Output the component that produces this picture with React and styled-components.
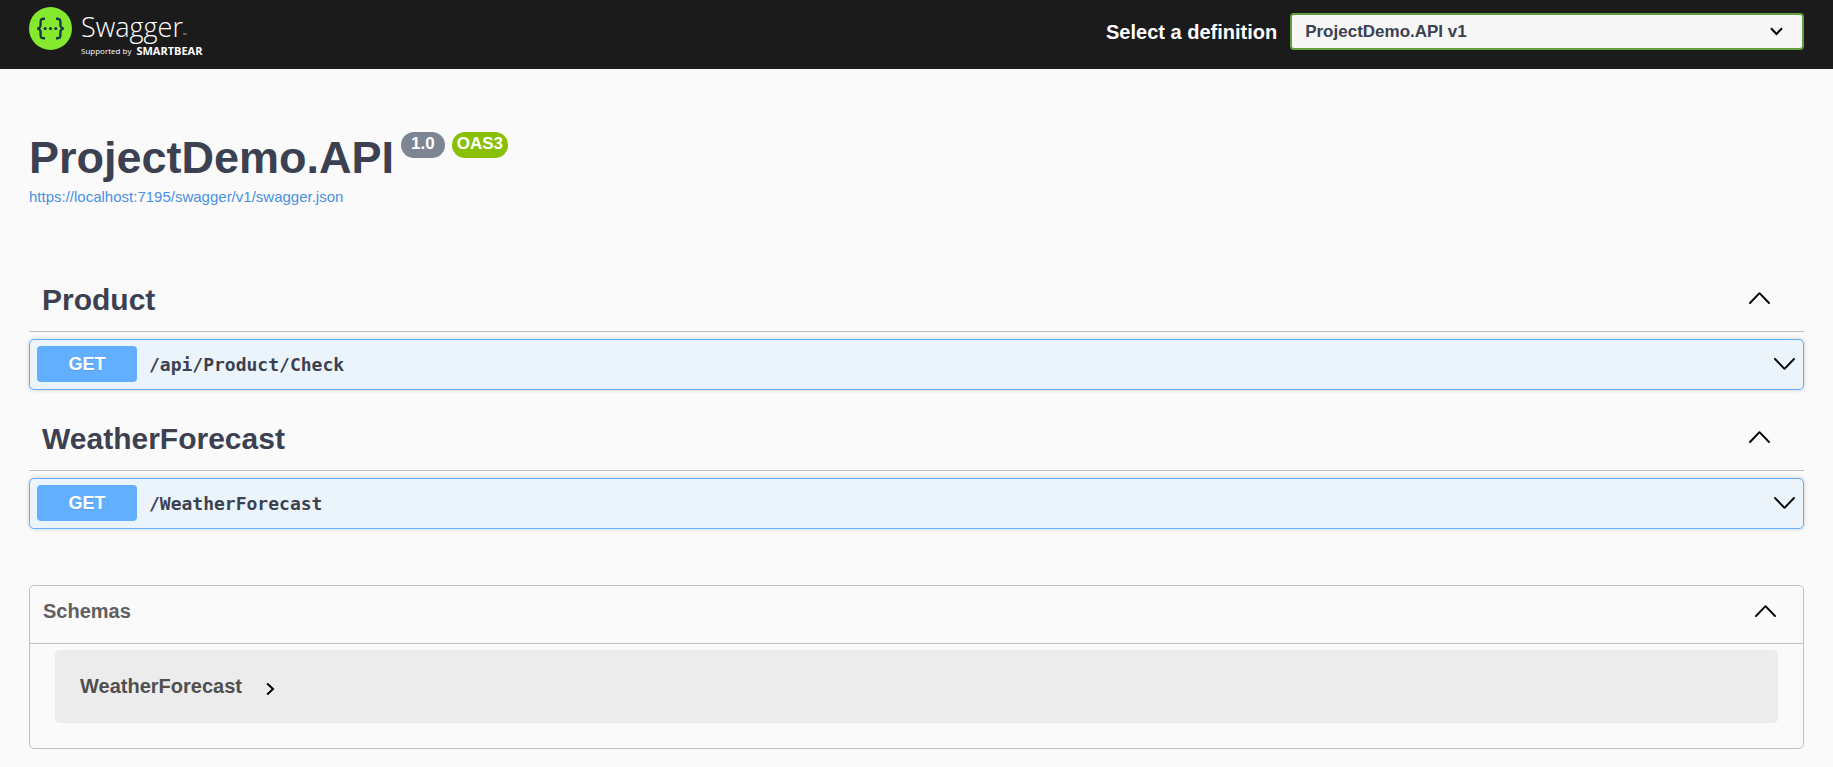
import { useState } from "react";
import styled, { createGlobalStyle } from "styled-components";

const colors = {
  text: "#3b4151",
  link: "#4990e2",
  get: "#61affe",
  green: "#62a03f",
};

const GlobalStyle = createGlobalStyle`
  * {
    box-sizing: border-box;
  }
  body {
    margin: 0;
    background: #fafafa;
    color: ${colors.text};
    font-family: "Liberation Sans", Arial, sans-serif;
  }
  button {
    margin: 0;
    padding: 0;
    border: none;
    background: none;
    color: inherit;
    font: inherit;
    cursor: pointer;
  }
`;

const Topbar = styled.header`
  display: flex;
  align-items: center;
  justify-content: space-between;
  padding: 7px 29px 13px;
  background: #1b1b1b;
`;
const Logo = styled.a`
  display: flex;
  align-items: flex-start;
  gap: 9px;
  color: white;
  text-decoration: none;
  font-family: "Open Sans", sans-serif;
`;
const LogoText = styled.span`
  display: flex;
  flex-direction: column;
`;
const Wordmark = styled.span`
  font-size: 27px;
  font-weight: 300;
  line-height: 39px;

  small {
    font-size: 5px;
    line-height: 5px;
  }
`;
const Tagline = styled.span`
  display: flex;
  gap: 5px;
  font-size: 8px;
  line-height: 10px;

  strong {
    font-size: 11px;
    font-weight: 700;
  }
`;
const Definition = styled.div`
  display: flex;
  align-items: center;
  gap: 13px;
  flex: 0 1 698px;
`;
const DefinitionLabel = styled.label`
  flex: 1;
  color: white;
  font-size: 20px;
  font-weight: 700;
  line-height: 24px;
  text-align: right;
  white-space: nowrap;
`;
const SelectBox = styled.div`
  position: relative;
  flex: 0 1 514px;

  svg {
    position: absolute;
    top: 14px;
    right: 21px;
    pointer-events: none;
  }
`;
const Select = styled.select`
  display: block;
  width: 100%;
  height: 37px;
  padding: 0 50px 0 13px;
  border: 2px solid ${colors.green};
  border-radius: 4px;
  background: #f7f7f7;
  color: ${colors.text};
  font-family: inherit;
  font-size: 17px;
  font-weight: 700;
  appearance: none;
`;

const Page = styled.main`
  padding: 63px 29px 18px;
`;
const Info = styled.section`
  margin-bottom: 62px;
`;
const TitleRow = styled.div`
  display: flex;
  align-items: flex-start;
  gap: 7px;
  margin-bottom: 2px;
`;
const Title = styled.h1`
  margin: 0;
  font-size: 45px;
  font-weight: 700;
  line-height: 52px;
`;
const Badge = styled.span`
  padding: 0 ${(props) => props.$pad};
  border-radius: 13px;
  background: ${(props) => props.$color};
  color: white;
  font-size: 17px;
  font-weight: 700;
  line-height: 24px;
  height: 26px;
`;
const SpecLink = styled.a`
  display: inline-block;
  color: ${colors.link};
  font-size: 15px;
  line-height: 22px;
  text-decoration: none;
`;

const Tag = styled.section`
  margin-bottom: 19px;
`;
const TagHeader = styled.div`
  display: flex;
  align-items: center;
  justify-content: space-between;
  padding: 12px 34px 13px 13px;
  border-bottom: 1px solid #bfc0c3;
`;
const TagTitle = styled.h2`
  margin: 0;
  font-size: 30px;
  font-weight: 700;
  line-height: 36px;
`;
const Toggle = styled.button`
  && {
    display: flex;
    padding-bottom: ${(props) => props.$lift || "0"};
  }
`;
const Operation = styled.button`
  && {
    display: flex;
    align-items: center;
    gap: 12px;
    width: 100%;
    margin-top: 7px;
    padding: 6px 8px 7px 7px;
    border: 1px solid ${colors.get};
    border-radius: 5px;
    background: #ebf3fb;
    box-shadow: 0 0 4px rgba(0, 0, 0, 0.19);
    text-align: left;
  }
`;
const Method = styled.span`
  width: 100px;
  border-radius: 4px;
  background: ${colors.get};
  color: white;
  font-size: 18px;
  font-weight: 700;
  line-height: 36px;
  text-align: center;
  text-shadow: 0 1px 0 rgba(0, 0, 0, 0.1);
`;
const Path = styled.span`
  flex: 1;
  font-family: "DejaVu Sans Mono", monospace;
  font-size: 18px;
  font-weight: 700;
`;

const Schemas = styled.section`
  margin-top: 56px;
  border: 1px solid #bfc0c3;
  border-radius: 5px;
`;
const SchemasHeader = styled.div`
  display: flex;
  align-items: center;
  justify-content: space-between;
  padding: 13px 27px 20px 13px;
  border-bottom: 1px solid #bfc0c3;
`;
const SchemasTitle = styled.h2`
  margin: 0;
  color: #606060;
  font-size: 20px;
  font-weight: 700;
  line-height: 24px;
`;
const Model = styled.div`
  margin: 6px 25px 25px;
  padding: 24px 25px 25px;
  border-radius: 5px;
  background: #ececec;
`;
const ModelToggle = styled.button`
  && {
    display: flex;
    gap: 24px;
    color: #505050;
    font-size: 20px;
    font-weight: 700;
    line-height: 24px;
  }
`;

function Arrow({ up }) {
  return (
    <svg width="21" height="12" viewBox="0 0 21 12" fill="none" stroke="black" strokeWidth="1.9" strokeLinecap="round" strokeLinejoin="round">
      <path d={up ? "M1 11L10.5 1.2L20 11" : "M1 1L10.5 10.8L20 1"} />
    </svg>
  );
}

function SwaggerMark() {
  return (
    <svg width="43" height="43" viewBox="0 0 43 43">
      <circle cx="21.5" cy="21.5" r="21.5" fill="#85ea2d" />
      <g fill="none" stroke="#173647" strokeWidth="2.4">
        <path d="M16 11.8C12.3 11.6 11.5 12.6 11.6 15.4C11.8 19 11.6 21 8.4 21.5C11.6 22 11.8 24 11.6 27.6C11.5 30.4 12.3 31.4 16 31.2" />
        <path d="M27 11.8C30.7 11.6 31.5 12.6 31.4 15.4C31.2 19 31.4 21 34.6 21.5C31.4 22 31.2 24 31.4 27.6C31.5 30.4 30.7 31.4 27 31.2" />
      </g>
      <g fill="#173647">
        <circle cx="16.2" cy="21.5" r="1.6" />
        <circle cx="21.5" cy="21.5" r="1.6" />
        <circle cx="26.8" cy="21.5" r="1.6" />
      </g>
    </svg>
  );
}

function TagSection({ name, path }) {
  const [open, setOpen] = useState(true);
  return (
    <Tag>
      <TagHeader>
        <TagTitle>{name}</TagTitle>
        <Toggle $lift="4px" aria-label={name} aria-expanded={open} onClick={() => setOpen(!open)}>
          <Arrow up={open} />
        </Toggle>
      </TagHeader>
      {open && (
        <Operation>
          <Method>GET</Method>
          <Path>{path}</Path>
          <Arrow />
        </Operation>
      )}
    </Tag>
  );
}

function App() {
  const [showSchemas, setShowSchemas] = useState(true);
  return (
    <>
      <GlobalStyle />
      <Topbar>
        <Logo href="#">
          <SwaggerMark />
          <LogoText>
            <Wordmark>Swagger<small>™</small></Wordmark>
            <Tagline>
              Supported by <strong>SMARTBEAR</strong>
            </Tagline>
          </LogoText>
        </Logo>
        <Definition>
          <DefinitionLabel htmlFor="definition">Select a definition</DefinitionLabel>
          <SelectBox>
            <Select id="definition">
              <option>ProjectDemo.API v1</option>
            </Select>
            <svg width="13" height="9" viewBox="0 0 13 9" fill="none" stroke="black" strokeWidth="2">
              <path d="M1 1.2L6.5 7L12 1.2" />
            </svg>
          </SelectBox>
        </Definition>
      </Topbar>
      <Page>
        <Info>
          <TitleRow>
            <Title>ProjectDemo.API</Title>
            <Badge $color="#7d8492" $pad="10px">1.0</Badge>
            <Badge $color="#89bf04" $pad="5px">OAS3</Badge>
          </TitleRow>
          <SpecLink href="#">https://localhost:7195/swagger/v1/swagger.json</SpecLink>
        </Info>
        <TagSection name="Product" path="/api/Product/Check" />
        <TagSection name="WeatherForecast" path="/WeatherForecast" />
        <Schemas>
          <SchemasHeader>
            <SchemasTitle>Schemas</SchemasTitle>
            <Toggle aria-label="Schemas" aria-expanded={showSchemas} onClick={() => setShowSchemas(!showSchemas)}>
              <Arrow up={showSchemas} />
            </Toggle>
          </SchemasHeader>
          {showSchemas && (
            <Model>
              <ModelToggle>
                WeatherForecast
                <svg width="9" height="24" viewBox="0 0 9 24" fill="none" stroke="black" strokeWidth="2">
                  <path d="M1.2 9.5L7 15L1.2 20.5" />
                </svg>
              </ModelToggle>
            </Model>
          )}
        </Schemas>
      </Page>
    </>
  );
}

export default App;
